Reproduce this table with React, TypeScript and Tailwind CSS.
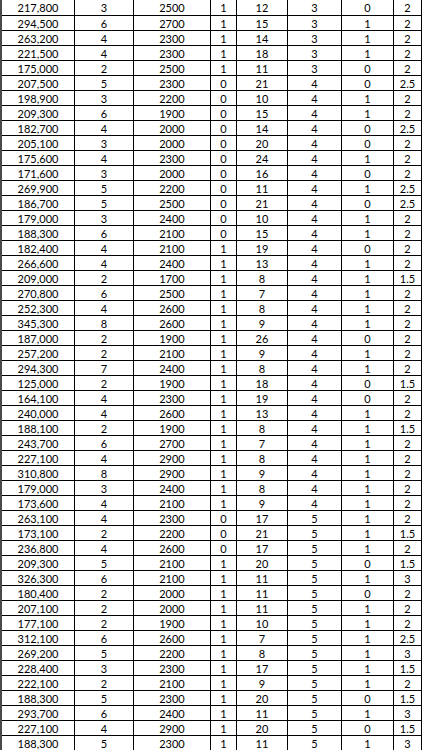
const rows: string[][] = [
  ["217,800", "3", "2500", "1", "12", "3", "0", "2"],
  ["294,500", "6", "2700", "1", "15", "3", "1", "2"],
  ["263,200", "4", "2300", "1", "14", "3", "1", "2"],
  ["221,500", "4", "2300", "1", "18", "3", "1", "2"],
  ["175,000", "2", "2500", "1", "11", "3", "0", "2"],
  ["207,500", "5", "2300", "0", "21", "4", "0", "2.5"],
  ["198,900", "3", "2200", "0", "10", "4", "1", "2"],
  ["209,300", "6", "1900", "0", "15", "4", "1", "2"],
  ["182,700", "4", "2000", "0", "14", "4", "0", "2.5"],
  ["205,100", "3", "2000", "0", "20", "4", "0", "2"],
  ["175,600", "4", "2300", "0", "24", "4", "1", "2"],
  ["171,600", "3", "2000", "0", "16", "4", "0", "2"],
  ["269,900", "5", "2200", "0", "11", "4", "1", "2.5"],
  ["186,700", "5", "2500", "0", "21", "4", "0", "2.5"],
  ["179,000", "3", "2400", "0", "10", "4", "1", "2"],
  ["188,300", "6", "2100", "0", "15", "4", "1", "2"],
  ["182,400", "4", "2100", "1", "19", "4", "0", "2"],
  ["266,600", "4", "2400", "1", "13", "4", "1", "2"],
  ["209,000", "2", "1700", "1", "8", "4", "1", "1.5"],
  ["270,800", "6", "2500", "1", "7", "4", "1", "2"],
  ["252,300", "4", "2600", "1", "8", "4", "1", "2"],
  ["345,300", "8", "2600", "1", "9", "4", "1", "2"],
  ["187,000", "2", "1900", "1", "26", "4", "0", "2"],
  ["257,200", "2", "2100", "1", "9", "4", "1", "2"],
  ["294,300", "7", "2400", "1", "8", "4", "1", "2"],
  ["125,000", "2", "1900", "1", "18", "4", "0", "1.5"],
  ["164,100", "4", "2300", "1", "19", "4", "0", "2"],
  ["240,000", "4", "2600", "1", "13", "4", "1", "2"],
  ["188,100", "2", "1900", "1", "8", "4", "1", "1.5"],
  ["243,700", "6", "2700", "1", "7", "4", "1", "2"],
  ["227,100", "4", "2900", "1", "8", "4", "1", "2"],
  ["310,800", "8", "2900", "1", "9", "4", "1", "2"],
  ["179,000", "3", "2400", "1", "8", "4", "1", "2"],
  ["173,600", "4", "2100", "1", "9", "4", "1", "2"],
  ["263,100", "4", "2300", "0", "17", "5", "1", "2"],
  ["173,100", "2", "2200", "0", "21", "5", "1", "1.5"],
  ["236,800", "4", "2600", "0", "17", "5", "1", "2"],
  ["209,300", "5", "2100", "1", "20", "5", "0", "1.5"],
  ["326,300", "6", "2100", "1", "11", "5", "1", "3"],
  ["180,400", "2", "2000", "1", "11", "5", "0", "2"],
  ["207,100", "2", "2000", "1", "11", "5", "1", "2"],
  ["177,100", "2", "1900", "1", "10", "5", "1", "2"],
  ["312,100", "6", "2600", "1", "7", "5", "1", "2.5"],
  ["269,200", "5", "2200", "1", "8", "5", "1", "3"],
  ["228,400", "3", "2300", "1", "17", "5", "1", "1.5"],
  ["222,100", "2", "2100", "1", "9", "5", "1", "2"],
  ["188,300", "5", "2300", "1", "20", "5", "0", "1.5"],
  ["293,700", "6", "2400", "1", "11", "5", "1", "3"],
  ["227,100", "4", "2900", "1", "20", "5", "0", "1.5"],
  ["188,300", "5", "2300", "1", "11", "5", "1", "3"],
];

export default function App() {
  return (
    <div className="h-[750px] w-[423px] overflow-hidden bg-white font-['Lato',sans-serif] text-[11px] text-black">
      <div className="w-[422px] border-l-2 border-[#4a4a4a]">
        {rows.map((row, i) => (
          <div
            key={i}
            className={`grid h-[15px] grid-cols-[73px_59px_77px_26px_51px_54px_52px_28px] ${
              i === 0 ? "" : "border-t border-black"
            }`}
          >
            {row.map((cell, j) => (
              <div
                key={j}
                className="flex items-center justify-center border-r border-black leading-none"
              >
                {cell}
              </div>
            ))}
          </div>
        ))}
      </div>
    </div>
  );
}
